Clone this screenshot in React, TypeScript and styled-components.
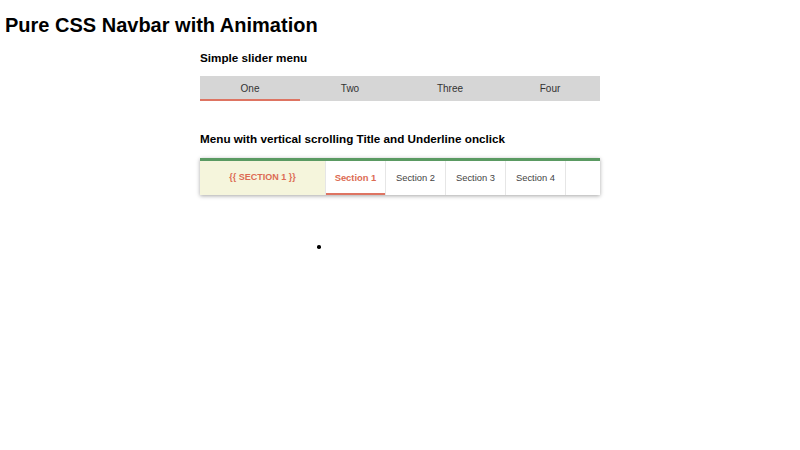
import React from "react";
import styled, { createGlobalStyle } from "styled-components";

const GlobalStyle = createGlobalStyle`
  html, body { background: #fff; }
  body {
    margin: 5px;
    font-family: "Liberation Sans", Arial, sans-serif;
    color: #000;
  }
`;

const Title = styled.h1`
  font-size: 20px;
  font-weight: bold;
  margin: 9.4px 0 13.4px;
  line-height: 23px;
`;

const Container = styled.div`
  width: 400px;
  margin: 0 auto;
`;

const SectionHeading = styled.h3`
  font-size: 11.7px;
  font-weight: bold;
  margin: 11.7px 0;
  line-height: 13.5px;
`;

const SliderBar = styled.nav`
  position: relative;
  display: flex;
  height: 25px;
  background: #d6d6d6;
  margin-bottom: 31px;
`;

const SliderItem = styled.a`
  flex: 1;
  display: flex;
  align-items: center;
  justify-content: center;
  font-size: 10px;
  color: #333;
  text-decoration: none;
  cursor: pointer;
`;

const SliderUnderline = styled.span`
  position: absolute;
  left: 0;
  bottom: 0;
  width: 25%;
  height: 2px;
  background: #de7462;
`;

const ScrollMenu = styled.nav`
  display: flex;
  height: 34px;
  margin-top: 12.7px;
  border-top: 3px solid #5a9a62;
  background: #fff;
  box-shadow: 0 1px 4px rgba(0, 0, 0, 0.35);
`;

const MenuTitle = styled.div`
  width: 125px;
  display: flex;
  align-items: center;
  justify-content: center;
  padding-bottom: 2px;
  background: #f5f5dc;
  color: #dc6b53;
  font-size: 9px;
  font-weight: bold;
  text-transform: uppercase;
  border-right: 1px solid #e6e6e6;
`;

const MenuItem = styled.a<{ $active?: boolean }>`
  position: relative;
  width: 59px;
  display: flex;
  align-items: center;
  justify-content: center;
  padding-bottom: 2px;
  font-size: 9.4px;
  font-weight: ${(p) => (p.$active ? "bold" : "normal")};
  color: ${(p) => (p.$active ? "#dc6b53" : "#444")};
  border-right: 1px solid #e6e6e6;
  text-decoration: none;
  cursor: pointer;

  &::after {
    content: "";
    position: absolute;
    left: 0;
    right: 0;
    bottom: 0;
    height: 2px;
    background: ${(p) => (p.$active ? "#de7462" : "transparent")};
  }
`;

const BulletRow = styled.div`
  display: flex;
  padding-left: 117px;
  margin-top: 50px;
`;

const Bullet = styled.span`
  width: 3.5px;
  height: 3.5px;
  border-radius: 50%;
  background: #000;
`;

const sliderItems = ["One", "Two", "Three", "Four"];
const sections = ["Section 1", "Section 2", "Section 3", "Section 4"];

export default function App() {
  return (
    <>
      <GlobalStyle />
      <Title>Pure CSS Navbar with Animation</Title>
      <Container>
        <SectionHeading>Simple slider menu</SectionHeading>
        <SliderBar>
          {sliderItems.map((t) => (
            <SliderItem key={t}>{t}</SliderItem>
          ))}
          <SliderUnderline />
        </SliderBar>
        <SectionHeading>Menu with vertical scrolling Title and Underline onclick</SectionHeading>
        <ScrollMenu>
          <MenuTitle>{"{{ Section 1 }}"}</MenuTitle>
          {sections.map((s, i) => (
            <MenuItem key={s} $active={i === 0}>
              {s}
            </MenuItem>
          ))}
        </ScrollMenu>
        <BulletRow>
          <Bullet />
        </BulletRow>
      </Container>
    </>
  );
}
